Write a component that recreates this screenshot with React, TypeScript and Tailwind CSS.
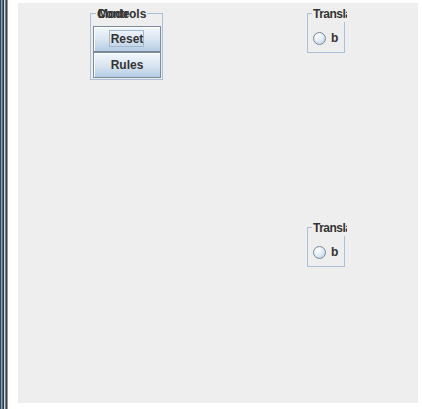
import React from 'react';

const FONT = { fontFamily: '"Liberation Sans", Arial, sans-serif' };

// Metal-style titled border: line box with the title cut into the top edge
const TitledBox: React.FC<{
  title: React.ReactNode;
  className?: string;
  titleClass?: string;
  children?: React.ReactNode;
}> = ({ title, className = '', titleClass = '', children }) => (
  <div className={`relative border border-[#a9c0d8] ${className}`}>
    <div className={`absolute top-[-7px] h-[15px] overflow-hidden bg-[#eeeeee] text-[12px] font-bold leading-[15px] text-[#333333] ${titleClass}`}>
      {title}
    </div>
    {children}
  </div>
);

const MetalButton: React.FC<{ label: string; focused?: boolean }> = ({ label, focused = false }) => (
  <div className="relative flex h-[26px] w-[68px] items-center justify-center border border-[#7a8a99] bg-gradient-to-b from-[#f3f7fb] via-[#dbe6f2] to-[#b5cce3] text-[12px] font-bold text-[#333333] shadow-[inset_1px_1px_0_#ffffff]">
    {focused && <div className="absolute left-[15px] top-[3px] h-[17px] w-[35px] border border-[#a3b8cc]" />}
    <span className="relative">{label}</span>
  </div>
);

const RadioRow: React.FC<{ label: string }> = ({ label }) => (
  <div className="flex items-center gap-[5px] pl-[5px]">
    <div className="h-[13px] w-[13px] rounded-full border border-[#7a8a99] bg-[radial-gradient(circle_at_35%_30%,#ffffff_0%,#e4edf6_45%,#b0c8e0_100%)]" />
    <span className="text-[12px] font-bold leading-[14px] text-[#333333]">{label}</span>
  </div>
);

const TranslBox: React.FC = () => (
  <TitledBox
    className="h-[40px] w-[38px] pt-[17px]"
    titleClass="left-[4px] w-[35px] pl-[1px] tracking-[-0.5px] whitespace-nowrap"
    title="Translate"
  >
    <RadioRow label="b" />
  </TitledBox>
);

export default function App() {
  const stripes = ['#3b4650', '#7fa4c4', '#4e6f8c', '#2b3744', '#d5dbe0', '#7d7d7d', '#3f3f3f', '#9a9a9a'];

  return (
    <div className="flex h-[409px] w-[422px] bg-white" style={FONT}>
      {/* window edge */}
      <div className="flex h-full">
        {stripes.map((c) => (
          <div key={c} className="h-full w-[1px]" style={{ background: c }} />
        ))}
      </div>

      <div className="ml-[10px] mt-[3px] flex h-[400px] w-[400px] bg-[#eeeeee]">
        {/* controls group */}
        <div className="ml-[72px] mt-[10px]">
          <TitledBox
            className="h-[67px] w-[73px] pl-[2px] pt-[12px]"
            titleClass="left-[5px] pl-[1px] pr-[1px]"
            title={
              <span className="relative block">
                <span>Controls</span>
                <span className="absolute left-[1px] top-0">Mode</span>
              </span>
            }
          >
            <MetalButton label="Reset" focused />
            <MetalButton label="Rules" />
          </TitledBox>
        </div>

        {/* transform groups */}
        <div className="ml-[144px] mt-[10px] flex flex-col gap-[174px]">
          <TranslBox />
          <TranslBox />
        </div>
      </div>
    </div>
  );
}
